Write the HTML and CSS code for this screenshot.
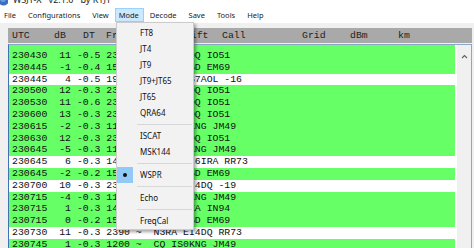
FILE: index.html
```html
<!DOCTYPE html>
<html lang="en">
<head>
    <meta charset="UTF-8">
    <title>WSJT-X</title>
    <link rel="stylesheet" href="styles.css">
</head>
<body>

<!-- Заголовок окна (обрезан сверху) -->
<div class="titlebar">
    <svg class="app-icon" width="8" height="7" viewBox="0 0 8 7">
        <circle cx="3.5" cy="0" r="5.5" fill="#3b6fc2"/>
        <circle cx="3" cy="-1" r="3" fill="#6d9be0"/>
    </svg>
    <span class="title">WSJT-X &nbsp; v2.1.0 &nbsp; by K1JT</span>
</div>

<div class="menubar">
    <span class="menu-item">File</span>
    <span class="menu-item">Configurations</span>
    <span class="menu-item">View</span>
    <span class="menu-item open">Mode</span>
    <span class="menu-item">Decode</span>
    <span class="menu-item">Save</span>
    <span class="menu-item">Tools</span>
    <span class="menu-item">Help</span>
</div>

<div class="main">
    <div class="header">
        <span class="col c-utc">UTC</span>
        <span class="col c-db">dB</span>
        <span class="col c-dt">DT</span>
        <span class="col c-freq">Freq</span>
        <span class="col c-drift">Drift</span>
        <span class="col c-call">Call</span>
        <span class="col c-grid">Grid</span>
        <span class="col c-dbm">dBm</span>
        <span class="col">km</span>
    </div>

    <div class="log">
        <div class="lines">
            <div class="row cq">230430  11 -0.5 2390 ~  CQ EI4DQ IO51</div>
            <div class="row cq">230445  -1 -0.4 1512 ~  CQ KD5BD EM69</div>
            <div class="row">230445   4 -0.5 1934 ~  OH1KH S7AOL -16</div>
            <div class="row cq">230500  12 -0.3 2390 ~  CQ EI4DQ IO51</div>
            <div class="row cq">230530  11 -0.6 2390 ~  CQ EI4DQ IO51</div>
            <div class="row cq">230600  13 -0.3 2390 ~  CQ EI4DQ IO51</div>
            <div class="row cq">230615  -2 -0.3 1199 ~  CQ IS0KNG JM49</div>
            <div class="row cq">230630  12 -0.3 2390 ~  CQ EI4DQ IO51</div>
            <div class="row cq">230645  -5 -0.3 1199 ~  CQ IS0KNG JM49</div>
            <div class="row">230645   6 -0.3 1445 ~  W2XYZ I6IRA RR73</div>
            <div class="row cq">230645  -2 -0.2 1512 ~  CQ KD5BD EM69</div>
            <div class="row">230700  10 -0.3 2390 ~  N3RA EI4DQ -19</div>
            <div class="row cq">230715  -4 -0.3 1199 ~  CQ IS0KNG JM49</div>
            <div class="row cq">230715   1 -0.3 1452 ~  CQ KD4XA IN94</div>
            <div class="row cq">230715   0 -0.2 1512 ~  CQ KD5BD EM69</div>
            <div class="row">230730  11 -0.3 2390 ~  N3RA EI4DQ RR73</div>
            <div class="row cq">230745   1 -0.3 1200 ~  CQ IS0KNG JM49</div>
        </div>
        <div class="scrollbar">
            <svg class="arrow" width="7" height="5" viewBox="0 0 7 5">
                <path d="M1 4 L3.5 1.5 L6 4" fill="none" stroke="#606060" stroke-width="1.1"/>
            </svg>
        </div>
    </div>
</div>

<!-- Открытое меню Mode -->
<div class="dropdown">
    <div class="dd-item"><span class="check"></span>FT8</div>
    <div class="dd-item"><span class="check"></span>JT4</div>
    <div class="dd-item"><span class="check"></span>JT9</div>
    <div class="dd-item"><span class="check"></span>JT9+JT65</div>
    <div class="dd-item"><span class="check"></span>JT65</div>
    <div class="dd-item"><span class="check"></span>QRA64</div>
    <div class="dd-sep"></div>
    <div class="dd-item"><span class="check"></span>ISCAT</div>
    <div class="dd-item"><span class="check"></span>MSK144</div>
    <div class="dd-sep"></div>
    <div class="dd-item"><span class="check on"><span class="dot"></span></span>WSPR</div>
    <div class="dd-sep"></div>
    <div class="dd-item"><span class="check"></span>Echo</div>
    <div class="dd-sep"></div>
    <div class="dd-item"><span class="check"></span>FreqCal</div>
</div>

</body>
</html>
```

FILE: styles.css
```css
body {
    margin: 0;
    width: 474px;
    height: 248px;
    overflow: hidden;
    background-color: #f0f0f0;
    font-family: "Noto Sans", sans-serif;
    color: #1a1a1a;
}

/* Заголовок окна */
.titlebar {
    height: 7px;
    overflow: hidden;
    background-color: #ffffff;
    display: flex;
    gap: 5px;
}
.app-icon {
    flex-shrink: 0;
}
.title {
    display: block;
    font-size: 9px;
    line-height: 9px;
    margin-top: -5px;
    color: #222;
}

/* Строка меню */
.menubar {
    height: 16px;
    background-color: #ffffff;
    display: flex;
    align-items: center;
    font-size: 7.5px;
}
.menu-item {
    box-sizing: border-box;
    height: 14px;
    line-height: 12px;
    padding: 0 5px;
    border: 1px solid transparent;
}
.menu-item:first-child {
    padding-left: 3px;
}
.menu-item.open {
    background-color: #cce8ff;
    border-color: #99d1ff;
    padding: 0 4px 0 3px;
}

.main {
    padding: 5px 2px 0 8px;
}

/* Заголовок таблицы */
.header {
    height: 15px;
    line-height: 15px;
    background-color: #a9a9a9;
    display: flex;
    padding-left: 4px;
    font-family: "Liberation Mono", monospace;
    font-size: 9.83px;
    color: #1e1e1e;
}
.col {
    flex-shrink: 0;
}
.c-utc { width: 42px; }
.c-db { width: 29px; }
.c-dt { width: 23px; }
.c-freq { width: 73px; }
.c-drift { width: 43px; }
.c-call { width: 80px; }
.c-grid { width: 48px; }
.c-dbm { width: 48px; }

/* Окно расшифровок */
.log {
    margin-top: 1px;
    height: 220px;
    overflow: hidden;
    display: flex;
    border: 1px solid #8aa6c8;
    border-left-color: #3f74b0;
}
.lines {
    flex: 1;
    padding-right: 2px;
    background-color: #ffffff;
    font-family: "Liberation Mono", monospace;
    font-size: 9.83px;
    line-height: 11.8px;
    color: #111;
}
.row {
    white-space: pre;
    padding-left: 3px;
}
.row:first-child {
    padding-top: 5px;
}
.row.cq {
    background-color: #66ff66;
}
.scrollbar {
    width: 14px;
    flex-shrink: 0;
    background-color: #f0f0f0;
    display: flex;
    justify-content: center;
    padding-top: 9px;
    box-sizing: border-box;
}

/* Выпадающее меню */
.dropdown {
    position: absolute;
    left: 116px;
    top: 22px;
    width: 78px;
    box-sizing: border-box;
    padding-top: 1.5px;
    background-color: #f2f2f2;
    border: 1px solid #cccccc;
    box-shadow: 2px 2px 3px rgba(0, 0, 0, 0.35);
    font-size: 8px;
    color: #111;
}
.dd-item {
    height: 16px;
    display: flex;
    align-items: center;
}
.check {
    width: 16px;
    height: 16px;
    margin-right: 7px;
    display: flex;
    align-items: center;
    justify-content: center;
    flex-shrink: 0;
}
.check.on {
    background-color: #91c9f7;
}
.dot {
    width: 4px;
    height: 4px;
    border-radius: 50%;
    background-color: #111;
}
.dd-sep {
    height: 1px;
    margin: 3px 1px 3px 20px;
    background-color: #d7d7d7;
}
```
